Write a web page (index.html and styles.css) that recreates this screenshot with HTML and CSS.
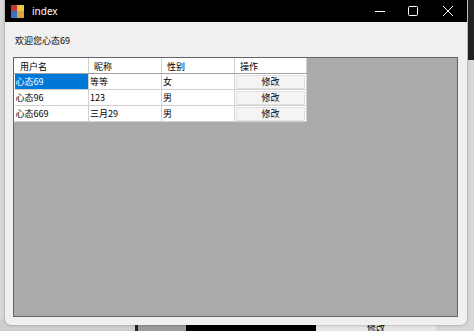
FILE: index.html
```html
<!DOCTYPE html>
<html lang="zh">
<head>
    <meta charset="UTF-8">
    <title>index</title>
    <link rel="stylesheet" href="styles.css">
</head>
<body>
    <div class="desktop">
        <div class="window">
            <div class="titlebar">
                <div class="app-icon">
                    <svg width="13" height="13" viewBox="0 0 13 13">
                        <rect x="0" y="0" width="6" height="6" fill="#c0392b"/>
                        <rect x="6" y="0" width="7" height="6" fill="#e8c24a"/>
                        <rect x="0" y="6" width="6" height="7" fill="#3a6fc4"/>
                        <rect x="6" y="6" width="7" height="7" fill="#d9a441"/>
                    </svg>
                </div>
                <span class="title">index</span>
                <div class="controls">
                    <span class="ctl">
                        <svg width="10" height="10" viewBox="0 0 10 10"><line x1="0" y1="5.5" x2="10" y2="5.5" stroke="#fff" stroke-width="1"/></svg>
                    </span>
                    <span class="ctl">
                        <svg width="10" height="10" viewBox="0 0 10 10"><rect x="0.5" y="0.5" width="9" height="9" rx="1" fill="none" stroke="#fff" stroke-width="1"/></svg>
                    </span>
                    <span class="ctl">
                        <svg width="10" height="10" viewBox="0 0 10 10"><path d="M0 0 L10 10 M10 0 L0 10" stroke="#fff" stroke-width="1"/></svg>
                    </span>
                </div>
            </div>
            <div class="client">
                <div class="welcome">欢迎您心态69</div>
                <div class="grid">
                    <table>
                        <colgroup>
                            <col class="c1">
                            <col class="c2">
                            <col class="c3">
                            <col class="c4">
                        </colgroup>
                        <thead>
                            <tr>
                                <th>用户名</th>
                                <th>昵称</th>
                                <th>性别</th>
                                <th>操作</th>
                            </tr>
                        </thead>
                        <tbody>
                            <tr>
                                <td class="selected">心态69</td>
                                <td>等等</td>
                                <td>女</td>
                                <td class="btn-cell"><button>修改</button></td>
                            </tr>
                            <tr>
                                <td>心态96</td>
                                <td>123</td>
                                <td>男</td>
                                <td class="btn-cell"><button>修改</button></td>
                            </tr>
                            <tr>
                                <td>心态669</td>
                                <td>三月29</td>
                                <td>男</td>
                                <td class="btn-cell"><button>修改</button></td>
                            </tr>
                        </tbody>
                    </table>
                </div>
            </div>
        </div>
        <div class="edge-right"></div>
        <div class="behind">
            <div class="behind-a"></div>
            <div class="behind-b"></div>
            <div class="behind-c"></div>
            <div class="behind-d">修改</div>
        </div>
    </div>
</body>
</html>
```

FILE: styles.css
```css
body {
    margin: 0;
    padding: 0;
    font-family: "Noto Sans CJK SC", "Liberation Sans", sans-serif;
    font-size: 9px;
    background-color: #d8d8d8;
    width: 474px;
    height: 331px;
    overflow: hidden;
}

.desktop {
    position: relative;
    height: 331px;
}

.window {
    position: relative;
    z-index: 1;
    margin-left: 5px;
    width: 462px;
    height: 325px;
    background-color: #f0f0f0;
    border-radius: 0 0 6px 6px;
    box-shadow: 0 0 3px rgba(0, 0, 0, 0.35);
    display: flex;
    flex-direction: column;
}

.titlebar {
    height: 22px;
    background-color: #000;
    color: #fff;
    display: flex;
    align-items: center;
}

.app-icon {
    width: 13px;
    height: 13px;
    margin-left: 6px;
    display: flex;
}

.title {
    margin-left: 8px;
    font-family: "Noto Sans", "Liberation Sans", sans-serif;
    font-size: 10px;
}

.controls {
    margin-left: auto;
    display: flex;
}

.ctl {
    width: 33px;
    height: 22px;
    display: flex;
    align-items: center;
    justify-content: center;
}

.ctl:last-child {
    width: 38px;
}

.client {
    flex: 1;
    padding: 12px 9px 8px 8px;
    display: flex;
    flex-direction: column;
}

.welcome {
    height: 23px;
    line-height: 14px;
    padding-left: 2px;
    color: #000;
}

.grid {
    flex: 1;
    background-color: #ababab;
    border: 1px solid #646464;
}

table {
    border-collapse: collapse;
    table-layout: fixed;
    width: 292px;
    background-color: #fff;
}

.c1 { width: 74px; }
.c2 { width: 73px; }
.c3 { width: 73px; }
.c4 { width: 72px; }

th, td {
    box-sizing: border-box;
    height: 16px;
    padding: 0 0 0 1px;
    border: 1px solid #d0d0d0;
    text-align: left;
    font-weight: normal;
    white-space: nowrap;
    overflow: hidden;
    line-height: 13px;
    color: #000;
}

th {
    height: 15px;
    padding-left: 5px;
    border-color: #ffffff #d0d0d0 #a0a0a0 #ffffff;
}

tr td:first-child {
    border-left: none;
}

.selected {
    background-color: #0078d7;
    color: #fff;
}

.btn-cell {
    padding: 0 1px;
}

button {
    display: block;
    width: 69px;
    height: 14px;
    padding: 0;
    font-family: inherit;
    font-size: 9px;
    background-color: #f4f4f4;
    border: 1px solid #e0e0e0;
    border-radius: 1px;
    color: #000;
    line-height: 11px;
}

.edge-right {
    position: absolute;
    right: 0;
    top: 0;
    width: 6px;
    height: 60px;
    background-color: #222;
}

.behind {
    position: absolute;
    left: 0;
    right: 0;
    bottom: 0;
    height: 12px;
    display: flex;
}

.behind-a {
    width: 135px;
    background-color: #cfcfcf;
    border-right: 3px solid #222;
}

.behind-b {
    width: 48px;
    background-color: #9a9a9a;
}

.behind-c {
    width: 130px;
    background-color: #000;
}

.behind-d {
    width: 120px;
    background-color: #e6e6e6;
    text-align: center;
    line-height: 18px;
}
```
